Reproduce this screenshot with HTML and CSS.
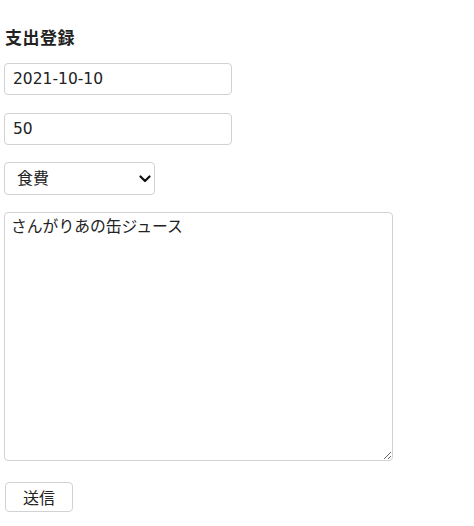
FILE: index.html
```html
<!DOCTYPE html>
<html lang="ja">
<head>
<meta charset="utf-8">
<title>支出登録</title>
<link rel="stylesheet" href="styles.css">
</head>
<body>
<form class="form">
  <h2 class="title">支出登録</h2>
  <input class="field field-wide field-date" type="text" value="2021-10-10">
  <input class="field field-wide field-amount" type="text" value="50">
  <div class="select-wrap">
    <select class="field field-select">
      <option>食費</option>
    </select>
    <svg class="chevron" width="12" height="8" viewBox="0 0 12 8"><path d="M1.5 1.5 L6 6 L10.5 1.5" fill="none" stroke="#111" stroke-width="2.2" stroke-linecap="round" stroke-linejoin="round"/></svg>
  </div>
  <textarea class="field field-area">さんがりあの缶ジュース</textarea>
  <div><button class="btn" type="button">送信</button></div>
</form>
</body>
</html>
```
FILE: styles.css
```css
html, body {
  margin: 0;
  padding: 0;
  background: #fff;
}
body {
  font-family: "DejaVu Sans", "Noto Sans CJK JP", sans-serif;
  color: #222;
}
.form {
  display: flex;
  flex-direction: column;
  align-items: flex-start;
  padding: 26px 0 0 4px;
}
.title {
  margin: 0 0 15px 1px;
  font-family: "Noto Sans CJK JP", sans-serif;
  font-size: 17px;
  font-weight: 700;
  letter-spacing: 0.5px;
  line-height: 22px;
  color: #222;
}
.field {
  box-sizing: border-box;
  border: 1px solid #d2d2d2;
  border-radius: 4px;
  background: #fff;
  font-family: "DejaVu Sans", "Noto Sans CJK JP", sans-serif;
  font-size: 15.5px;
  color: #222;
  margin: 0 0 17px 0;
  outline: none;
}
.field-wide {
  width: 228px;
  height: 32px;
  padding: 0 8px;
}
.field-date {
  margin-bottom: 18px;
}
.select-wrap {
  position: relative;
  margin: 0 0 17px 0;
}
.field-select {
  -webkit-appearance: none;
  appearance: none;
  width: 151px;
  height: 33px;
  padding: 0 12px;
  margin: 0;
  display: block;
  font-size: 16px;
}
.chevron {
  position: absolute;
  right: 4px;
  top: 13px;
  pointer-events: none;
}
.field-area {
  width: 389px;
  height: 249px;
  padding: 2px 6px;
  font-size: 15.8px;
  line-height: 24px;
  resize: both;
  margin-bottom: 21px;
}
.btn {
  box-sizing: border-box;
  width: 68px;
  height: 30px;
  margin-left: 1px;
  border: 1px solid #d2d2d2;
  border-radius: 4px;
  background: #fff;
  font-family: "Noto Sans CJK JP", sans-serif;
  font-size: 16px;
  color: #222;
  padding: 0;
}
```
